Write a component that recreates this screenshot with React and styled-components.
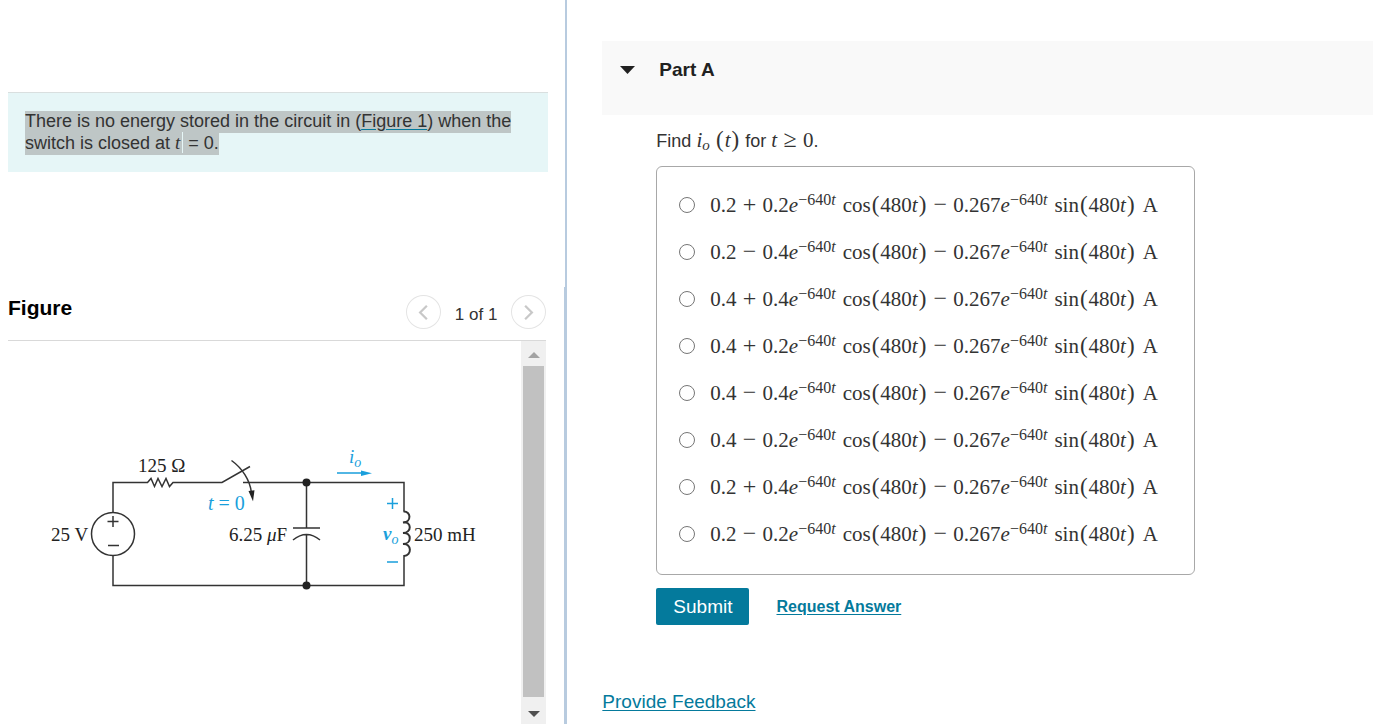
import React, { useState } from 'react'
import styled, { createGlobalStyle } from 'styled-components';
import { ChevronLeft, ChevronRight } from 'lucide-react';

const GlobalStyle = createGlobalStyle`
  * {
    box-sizing: border-box;
  }

  body {
    margin: 0;
    background: #fff;
    color: #333;
    font-family: "Liberation Sans", Arial, sans-serif;
    font-size: 18px;
    line-height: 22px;
  }
`;

const Page = styled.div`
  display: grid;
  grid-template-columns: minmax(0, 7fr) minmax(0, 10fr);
  grid-template-rows: minmax(0, 1fr);
  height: 100vh;
  overflow: hidden;
`;

const LeftPane = styled.aside`
  display: flex;
  flex-direction: column;
  min-height: 0;
  padding-top: 92px;
`;

const RightPane = styled.main`
  border-left: 2px solid #b8cbdf;
  padding: 41px 0 0 35px;
`;

const Problem = styled.section`
  min-height: 80px;
  margin: 0 17px 0 8px;
  padding: 17px;
  border-top: 1px solid #d9dfdf;
  background: #e6f6f7;
`;

const Statement = styled.p`
  margin: 0;
`;

const Selected = styled.span`
  padding-bottom: 2px;
  background: #bec6c6;
  box-decoration-break: clone;
  -webkit-box-decoration-break: clone;
`;

const FigureLink = styled.a`
  color: inherit;
  text-decoration: underline #047a9c;
  text-underline-offset: 2px;
`;

const SelectedVar = styled.i`
  padding-right: 2px;
  border-right: 1px solid #e6f6f7;
  font-family: "Liberation Serif", "Times New Roman", serif;
  font-size: 19px;
`;

const FigurePanel = styled.section`
  display: flex;
  flex: 1;
  flex-direction: column;
  min-height: 0;
  margin-top: 115px;
  padding: 8px 18px 0 8px;
  border-right: 1px solid #b8cbdf;
`;

const FigureHeader = styled.header`
  display: flex;
  justify-content: space-between;
  height: 46px;
  border-bottom: 1px solid #d9d9d9;
`;

const FigureTitle = styled.h2`
  margin: 2px 0 0;
  color: #000;
  font-size: 21px;
  line-height: 22px;
`;

const Pager = styled.nav`
  display: flex;
  gap: 14px;
`;

const PageCount = styled.span`
  padding-top: 9px;
  font-size: 17px;
`;

const PagerButton = styled.button`
  display: flex;
  align-items: center;
  justify-content: center;
  width: 35px;
  height: 34px;
  padding: 0;
  border: 1px solid #e4e4e4;
  border-radius: 50%;
  background: #fff;
  color: #c8c8c8;

  svg {
    stroke-linecap: butt;
    stroke-linejoin: miter;
  }
`;

const FigureView = styled.div`
  display: flex;
  flex: 1;
  min-height: 0;
`;

const FigureCanvas = styled.div`
  flex: 1;
  min-width: 0;
  padding: 99px 0 0 32px;
  overflow: hidden;
`;

const ScrollBar = styled.div`
  display: flex;
  flex-direction: column;
  width: 25px;
  padding: 0 2px;
  background: #f0f0f0;
`;

const ScrollButton = styled.button`
  display: flex;
  align-items: center;
  justify-content: center;
  height: ${(props) => (props.$end ? '27px' : '25px')};
  padding: ${(props) => (props.$end ? '6px 0 0' : '2px 0 0')};
  border: 0;
  background: none;
  color: ${(props) => (props.$end ? '#505050' : '#a3a3a3')};
`;

const ScrollThumb = styled.div`
  flex: 1;
  background: #c1c1c1;
`;

const PartHeader = styled.header`
  height: 74px;
  padding: 18px;
  background: #f9f9f9;
`;

const PartToggle = styled.button`
  display: flex;
  align-items: center;
  gap: 24px;
  padding: 0;
  border: 0;
  background: none;
  color: #212121;
  font: bold 19px/22px "Liberation Sans", Arial, sans-serif;
`;

const PartBody = styled.div`
  padding: 13px 54px 0;
`;

const Question = styled.p`
  margin: 0 0 13px;
  line-height: 24px;
`;

const Math = styled.span`
  font-family: "Liberation Serif", "Times New Roman", serif;
  font-size: 21px;
  line-height: 24px;
  white-space: nowrap;

  sub {
    font-size: 15px;
    font-style: italic;
    line-height: 0;
    vertical-align: -3px;
  }

  sup {
    margin-right: 7px;
    font-size: 16px;
    line-height: 0;
    vertical-align: 7px;
  }
`;

const Op = styled.span`
  display: inline-block;
  width: 26px;
  font-size: 24px;
  line-height: 22px;
  text-align: center;
`;

const Paren = styled.span`
  margin: 0 1px;
  font-size: 23px;
  line-height: 0;
`;

const Unit = styled.span`
  margin-left: 2px;
`;

const Options = styled.fieldset`
  width: fit-content;
  margin: 0;
  padding: 14px 36px 17px 22px;
  border: 1px solid #a8a8a8;
  border-radius: 6px;
`;

const Option = styled.label`
  display: flex;
  align-items: center;
  gap: 15px;
  height: 47px;
`;

const Radio = styled.input`
  appearance: none;
  width: 16px;
  height: 16px;
  margin: 0;
  border: 1px solid #767676;
  border-radius: 50%;
  background: #fff;

  &:checked {
    border-color: #047a9c;
    box-shadow: inset 0 0 0 3px #fff;
    background: #047a9c;
  }
`;

const Actions = styled.div`
  display: flex;
  align-items: center;
  gap: 27px;
  margin-top: 13px;
`;

const SubmitButton = styled.button`
  height: 37px;
  padding: 0 17px;
  border: 0;
  border-radius: 2px;
  background: #047a9c;
  color: #fff;
  font: 19px/22px "Liberation Sans", Arial, sans-serif;
`;

const TextLink = styled.a`
  color: #047a9c;
  font-size: ${(props) => (props.$bold ? '16px' : '19px')};
  font-weight: ${(props) => (props.$bold ? 'bold' : 'normal')};
  text-underline-offset: 2px;
`;

const Feedback = styled.footer`
  margin-top: 66px;
`;

const CircuitSvg = styled.svg`
  display: block;
  font-family: "Liberation Serif", "Times New Roman", serif;
  font-size: 19px;
`;

const options = [
  { base: '0.2', sign: '+', amp: '0.2' },
  { base: '0.2', sign: '−', amp: '0.4' },
  { base: '0.4', sign: '+', amp: '0.4' },
  { base: '0.4', sign: '+', amp: '0.2' },
  { base: '0.4', sign: '−', amp: '0.4' },
  { base: '0.4', sign: '−', amp: '0.2' },
  { base: '0.2', sign: '+', amp: '0.4' },
  { base: '0.2', sign: '−', amp: '0.2' },
];

const Circuit = () => (
  <CircuitSvg width="450" height="160" viewBox="40 440 450 160" role="img" aria-label="Circuit diagram">
    <g fill="none" stroke="#333" strokeWidth="1.5">
      <path d="M113 512.5V482.5H147.500L151 478.500L154.500 486.500L158 478.500L162 486.500L166 478.500L169.500 486.500L173 482.500H222L250 466.500" />
      <path d="M243 482.500H404V511.500" />
      <path d="M403.500 511.500C411 511 412 522 403 522.500C412 521 412 533 403 533C412 532 412 544 403 544C412 543 412 556 404 556" strokeWidth="2" />
      <path d="M404 555V585.500H113V555.500" />
      <circle cx="113" cy="534" r="21.500" />
      <path d="M107.500 521.500h11M113 516v11M108 545.500h11" />
      <path d="M306.500 482.500V528M293 528h27M293 540q13.500-11 27 0M306.500 534.500V585.500" />
      <path d="M231.500 460.500C242 468 250 480 251.500 493" />
    </g>
    <g fill="#222">
      <path d="M248.500 491l6-.8-1.500 11z" />
      <circle cx="306.500" cy="482.500" r="4" />
      <circle cx="306.500" cy="585.500" r="4" />
      <text x="138" y="472">125 Ω</text>
      <text x="51" y="541">25 V</text>
      <text x="229" y="541">6.25 <tspan fontStyle="italic">μ</tspan>F</text>
      <text x="414" y="541">250 mH</text>
    </g>
    <g fill="none" stroke="#1a9fdc" strokeWidth="1.5">
      <path d="M337 473h26M387 503.500h11M392.500 498v11M387 562h11" />
    </g>
    <g fill="#1a9fdc">
      <path d="M361 470.500l11 2.700-11 2.700z" />
      <text x="208" y="510" fontSize="20"><tspan fontStyle="italic">t</tspan> = 0</text>
      <text x="349" y="463" fontStyle="italic">i<tspan dy="4" fontSize="14">o</tspan></text>
      <text x="383" y="540" fontStyle="italic" fontWeight="bold">v<tspan dy="4" fontSize="14" fontWeight="normal">o</tspan></text>
    </g>
  </CircuitSvg>
)

const Formula = ({ base, sign, amp }) => (
  <Math>
    {base}<Op>{sign}</Op>{amp}<i>e</i><sup>−640<i>t</i></sup>
    cos<Paren>(</Paren>480<i>t</i><Paren>)</Paren><Op>−</Op>0.267<i>e</i><sup>−640<i>t</i></sup>
    sin<Paren>(</Paren>480<i>t</i><Paren>)</Paren> <Unit>A</Unit>
  </Math>
)

const App = () => {
  const [answer, setAnswer] = useState(null);
  const [open, setOpen] = useState(true);

  return (
    <>
      <GlobalStyle />
      <Page>
        <LeftPane>
          <Problem>
            <Statement>
              <Selected>
                There is no energy stored in the circuit in (<FigureLink href="#figure">Figure 1</FigureLink>) when the switch is closed at <SelectedVar>t</SelectedVar> = 0.
              </Selected>
            </Statement>
          </Problem>

          <FigurePanel id="figure">
            <FigureHeader>
              <FigureTitle>Figure</FigureTitle>
              <Pager>
                <PagerButton type="button" aria-label="Previous figure"><ChevronLeft size={27} strokeWidth={2} /></PagerButton>
                <PageCount>1 of 1</PageCount>
                <PagerButton type="button" aria-label="Next figure"><ChevronRight size={27} strokeWidth={2} /></PagerButton>
              </Pager>
            </FigureHeader>
            <FigureView>
              <FigureCanvas>
                <Circuit />
              </FigureCanvas>
              <ScrollBar>
                <ScrollButton type="button" aria-label="Scroll up">
                  <svg width="12" height="6"><path d="M0 6L6 0l6 6z" fill="currentColor" /></svg>
                </ScrollButton>
                <ScrollThumb />
                <ScrollButton type="button" aria-label="Scroll down" $end>
                  <svg width="12" height="6"><path d="M0 0l6 6 6-6z" fill="currentColor" /></svg>
                </ScrollButton>
              </ScrollBar>
            </FigureView>
          </FigurePanel>
        </LeftPane>

        <RightPane>
          <PartHeader>
            <PartToggle type="button" aria-expanded={open} onClick={() => setOpen(!open)}>
              <svg width="15" height="8"><path d="M0 0h15L7.500 8z" fill="currentColor" /></svg>
              Part A
            </PartToggle>
          </PartHeader>

          {open && (
            <PartBody>
              <Question>
                Find <Math><i>i</i><sub>o</sub> <Paren>(</Paren><i>t</i><Paren>)</Paren></Math> for <Math><i>t</i><Op>≥</Op>0</Math>.
              </Question>
              <Options>
                {options.map((item, index) => (
                  <Option key={index}>
                    <Radio
                      type="radio"
                      name="answer"
                      checked={answer === index}
                      onChange={() => setAnswer(index)}
                    />
                    <Formula {...item} />
                  </Option>
                ))}
              </Options>
              <Actions>
                <SubmitButton type="button">Submit</SubmitButton>
                <TextLink href="#answer" $bold>Request Answer</TextLink>
              </Actions>
            </PartBody>
          )}

          <Feedback>
            <TextLink href="#feedback">Provide Feedback</TextLink>
          </Feedback>
        </RightPane>
      </Page>
    </>
  )
}

export default App
